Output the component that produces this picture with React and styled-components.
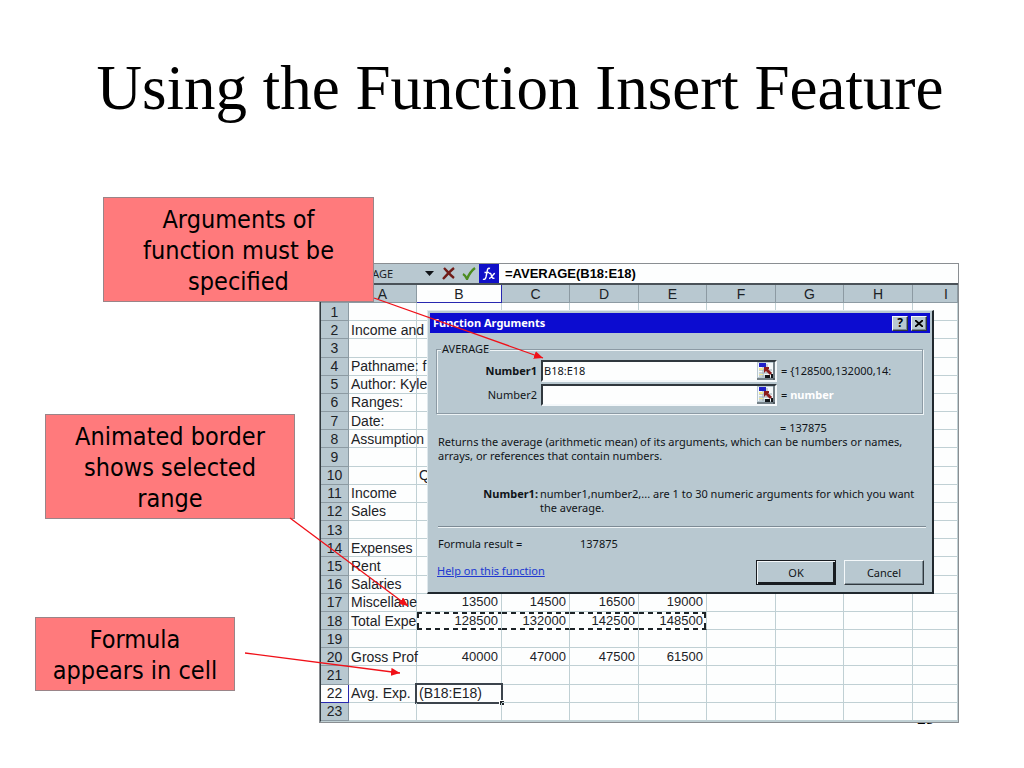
import React from 'react';
import styled, { createGlobalStyle, css } from 'styled-components';

const face = '#b8c8d0';
const grid = '#c0d0d4';
const ink = '#1c2226';
const uiFont = "'Noto Sans', 'DejaVu Sans Condensed', sans-serif";
const cellFont = "'Liberation Sans', Arial, sans-serif";

const GlobalStyle = createGlobalStyle`
  *, *::before, *::after { box-sizing: border-box; }
  body { margin: 0; background: #fff; }
`;

const Slide = styled.main`
  position: relative;
  min-height: 100vh;
  padding: 53px 65px 24px 319px;
  overflow: hidden;
  background: #fff;
  color: #000;
`;

const Title = styled.h1`
  margin: 0 -49px 140px -287px;
  font: 400 63px/70px 'Liberation Serif', 'Times New Roman', serif;
  text-align: center;
  white-space: nowrap;
`;

const Sheet = styled.section`
  position: relative;
  z-index: 1;
  height: 460px;
  border: 1px solid #8a8e92;
  background: #fdfefe;
  font-family: ${cellFont};
  color: ${ink};
`;

const FormulaBar = styled.div`
  display: flex;
  align-items: stretch;
  height: 21px;
  border-bottom: 2px solid #4a5258;
  background: ${face};
`;

const NameBox = styled.div`
  display: flex;
  align-items: center;
  justify-content: space-between;
  width: 116px;
  padding: 0 2px 0 26px;
  font: 11px/18px ${uiFont};
`;

const BarButton = styled.button`
  display: flex;
  align-items: center;
  justify-content: center;
  width: 20px;
  margin: 0;
  padding: 0;
  border: 0;
  background: ${(p) => (p.$active ? '#1010c8' : 'transparent')};
`;

const BarTools = styled.div`
  display: flex;
  width: 63px;
  padding-left: 3px;
`;

const FormulaInput = styled.input`
  flex: 1;
  min-width: 0;
  padding: 0 0 0 6px;
  border: 0;
  outline: 0;
  background: #fdfefe;
  font: 700 13px/18px ${cellFont};
  color: #000;
`;

const GridClip = styled.div`
  overflow: hidden;
  height: 437px;
  border-left: 1px solid #30383c;
  border-bottom: 1px solid ${grid};
`;

const GridTable = styled.table`
  width: 100%;
  height: 436px;
  table-layout: fixed;
  border-collapse: separate;
  border-spacing: 0;
  font-size: 14px;
  line-height: 16px;
`;

const ColHead = styled.th`
  height: 18px;
  padding: 0;
  border-right: 1px solid #8c9aa2;
  border-bottom: 1px solid #8c9aa2;
  background: ${face};
  font-weight: 400;
  ${(p) => p.$active && css`
    background: #fdfefe;
    border-right-color: #2828b0;
    border-bottom-color: #2828b0;
  `}
`;

const RowHead = styled(ColHead)``;

const LastHead = styled.span`
  display: block;
  padding-left: 22px;
`;

const Cell = styled.td`
  position: relative;
  height: 18px;
  padding: 0 3px 0 2px;
  border-right: 1px solid ${grid};
  border-bottom: 1px solid ${grid};
  white-space: nowrap;
  overflow: ${(p) => (p.$spill ? 'visible' : 'hidden')};
  ${(p) => p.$number && css`
    font-size: 13px;
    text-align: right;
  `}
  ${(p) => p.$marching && css`
    border-bottom-color: transparent;
    background:
      repeating-linear-gradient(90deg, ${ink} 0 5px, transparent 5px 9px) top / 100% 2px no-repeat border-box,
      repeating-linear-gradient(90deg, ${ink} 0 5px, transparent 5px 9px) bottom / 100% 2px no-repeat border-box;
  `}
  ${(p) => p.$edge && css`
    &::after {
      content: '';
      position: absolute;
      top: 0;
      bottom: 0;
      ${p.$edge}: 0;
      border-left: 2px dashed ${ink};
    }
  `}
  ${(p) => p.$active && css`
    overflow: visible;
    &::before {
      content: '';
      position: absolute;
      inset: -2px;
      border: 2px solid #3c444c;
    }
    &::after {
      content: '';
      position: absolute;
      right: -4px;
      bottom: -4px;
      width: 6px;
      height: 6px;
      border: 1px solid #fff;
      background: ${ink};
    }
  `}
`;

const Dialog = styled.form`
  position: absolute;
  top: 46px;
  left: 107px;
  width: 507px;
  height: 284px;
  padding: 2px;
  border: 1px solid #dfe8ec;
  border-right: 2px solid #20282e;
  border-bottom: 2px solid #20282e;
  background: ${face};
  font: 11px/14px ${uiFont};
  color: #101418;
`;

const TitleBar = styled.header`
  display: flex;
  align-items: center;
  gap: 3px;
  height: 20px;
  padding: 0 3px;
  background: #0c0cd0;
  color: #fff;
`;

const DialogTitle = styled.h2`
  flex: 1;
  margin: 0;
  font: 700 11px/16px ${uiFont};
`;

const raised = css`
  border: 1px solid;
  border-color: #f4f8fa #30383e #30383e #f4f8fa;
  box-shadow: inset -1px -1px 0 #7c8a92;
`;

const CaptionButton = styled.button`
  display: flex;
  align-items: center;
  justify-content: center;
  width: 16px;
  height: 15px;
  padding: 0;
  background: ${face};
  color: #000;
  font: 700 12px/12px ${uiFont};
  ${raised}
`;

const DialogBody = styled.div`
  display: flex;
  flex-direction: column;
  padding: 9px 4px 0 6px;
`;

const Group = styled.fieldset`
  display: grid;
  gap: 2px;
  min-width: 0;
  height: 72px;
  margin: 0 3px 7px 0;
  padding: 4px 22px 0 4px;
  border: 1px solid #8c9aa4;
  box-shadow: inset 1px 1px 0 #eef4f6, 1px 1px 0 #eef4f6;
  align-content: start;
`;

const Legend = styled.legend`
  height: 14px;
  padding: 0 1px;
  line-height: 14px;
  background: ${face};
`;

const ArgRow = styled.div`
  display: grid;
  grid-template-columns: 96px 236px 1fr;
  column-gap: 4px;
  align-items: center;
  height: 22px;
`;

const ArgLabel = styled.label`
  text-align: right;
  font-weight: ${(p) => (p.$bold ? 700 : 400)};
`;

const RefBox = styled.div`
  display: flex;
  height: 22px;
  border: 2px solid;
  border-color: #30383e #f4f8fa #f4f8fa #30383e;
  background: #fdfefe;
`;

const RefInput = styled.input`
  flex: 1;
  min-width: 0;
  padding: 0 1px;
  border: 0;
  outline: 0;
  background: transparent;
  font: 11px/14px ${uiFont};
  color: #101418;
`;

const RefButton = styled.button`
  width: 18px;
  height: 18px;
  padding: 0;
  border: 0;
  background: ${face};
  svg { display: block; }
`;

const ArgValue = styled.output`
  white-space: nowrap;
  b { color: #fff; }
`;

const Total = styled.output`
  padding-left: 344px;
`;

const Description = styled.p`
  margin: 0 0 24px;
  padding: 0 20px 0 2px;
`;

const ArgHelp = styled.p`
  display: grid;
  grid-template-columns: 102px 1fr;
  column-gap: 2px;
  margin: 0 0 11px;
  padding-right: 8px;
  b { text-align: right; }
`;

const Result = styled.div`
  display: grid;
  grid-template-columns: 142px 1fr;
  margin-left: 2px;
  padding-top: 10px;
  border-top: 1px solid #7c8a94;
  box-shadow: inset 0 1px 0 #eef4f6;
`;

const Footer = styled.footer`
  display: flex;
  align-items: center;
  gap: 8px;
  padding: 9px 2px 0 1px;
`;

const HelpLink = styled.a`
  margin-right: auto;
  padding-bottom: 4px;
  color: #2038d0;
`;

const PushButton = styled.button`
  width: 80px;
  height: 25px;
  padding: 0;
  background: ${face};
  font: 11px/14px ${uiFont};
  color: #101418;
  ${raised}
  ${(p) => p.$default && css`
    border: 1px solid #181c20;
    box-shadow: inset 1px 1px 0 #f4f8fa, inset -2px -2px 0 #181c20;
  `}
`;

const Callout = styled.aside`
  position: absolute;
  z-index: 2;
  top: ${(p) => p.$y}px;
  left: ${(p) => p.$x}px;
  width: ${(p) => p.$w}px;
  padding: 6px 16px 4px;
  border: 1px solid #9a8488;
  background: #ff7a7c;
  font: 25px/31px 'DejaVu Sans Condensed', 'Noto Sans', sans-serif;
  text-align: center;
`;

const Arrows = styled.svg`
  position: absolute;
  z-index: 3;
  top: 0;
  left: 0;
  pointer-events: none;
`;

const PageNumber = styled.div`
  margin: -15px 24px 0 0;
  font: 18px/20px 'Liberation Serif', 'Times New Roman', serif;
  text-align: right;
`;

const columns = ['A', 'B', 'C', 'D', 'E', 'F', 'G', 'H', 'I'];
const widths = [68, 85, 68, 69, 68, 69, 68, 69];
const rows = [
  [], ['Income and'], [], ['Pathname: f'], ['Author: Kyle'], ['Ranges:'], ['Date:'], ['Assumption'], [],
  ['', 'Q'], ['Income'], ['Sales'], [], ['Expenses'], ['Rent'], ['Salaries'],
  ['Miscellane', 13500, 14500, 16500, 19000],
  ['Total Expe', 128500, 132000, 142500, 148500],
  [], ['Gross Prof', 40000, 47000, 47500, 61500], [], ['Avg. Exp.', '(B18:E18)'], [],
];
const args = [
  { id: 'number1', label: 'Number1', value: 'B18:E18', bold: true, result: '{128500,132000,14:' },
  { id: 'number2', label: 'Number2', value: '', bold: false, result: <b>number</b> },
];
const arrows = [
  [374, 298, 543, 358],
  [290, 518, 408, 606],
  [245, 653, 400, 673],
];

const RangeIcon = () => (
  <svg width="18" height="18" viewBox="0 0 18 18">
    <path d="M1 1h15v14H1z" fill="#f4f8fa" />
    <path d="M2 1h7v4H2z" fill="#2020c8" />
    <path d="M2 8h13M2 11h13M2 14h7M6 5v10M10 2v9" stroke="#9cacb4" fill="none" />
    <path d="M2 6h4v2H2zM2 12h4v1H2z" fill="#f0e890" />
    <path d="M7 5h5v2h-1l4 4-2 2-4-4-2 2z" fill="#8c1c1c" />
    <path d="M8 13h5v3H8zM14 12h2v4h-2z" fill="#101418" />
    <path d="M17 0v18M0 17h18" stroke="#30383e" fill="none" />
  </svg>
);

function Spreadsheet() {
  return (
    <>
      <FormulaBar>
        <NameBox>
          AVERAGE
          <svg width="9" height="5" viewBox="0 0 9 5"><path d="M0 0h9L4.500 5z" fill="#101418" /></svg>
        </NameBox>
        <BarTools>
          <BarButton type="button" aria-label="Cancel entry">
            <svg width="14" height="13" viewBox="0 0 14 13">
              <path d="M2 1c3 3 6 7 10 10M12 1C8 4 5 8 1 12" stroke="#701c18" strokeWidth="2.400" fill="none" />
            </svg>
          </BarButton>
          <BarButton type="button" aria-label="Enter">
            <svg width="14" height="13" viewBox="0 0 14 13">
              <path d="M1 7c2 1 3 3 4 5C7 7 9 4 13 1" stroke="#4c8c20" strokeWidth="2.400" fill="none" />
            </svg>
          </BarButton>
          <BarButton type="button" $active aria-label="Insert function">
            <svg width="14" height="14" viewBox="0 0 14 14" fill="none" stroke="#fff" strokeWidth="1.400">
              <path d="M8 1.500C6 .5 5.500 2 5 5L4 10c-.5 2-1.500 3-3 2M2.500 5.500H7M7 6.500c2-1 2 1 2.500 2.500S11 12 12.500 11M13 6.500c-2-.5-3 5-6 5" />
            </svg>
          </BarButton>
        </BarTools>
        <FormulaInput aria-label="Formula" defaultValue="=AVERAGE(B18:E18)" />
      </FormulaBar>
      <GridClip>
        <GridTable>
          <colgroup>
            <col width="28" />
            {widths.map((w, i) => <col key={i} width={w} />)}
            <col />
          </colgroup>
          <thead>
            <tr>
              <ColHead />
              {columns.map((c) => (
                <ColHead key={c} scope="col" $active={c === 'B'}>
                  {c === 'I' ? <LastHead>{c}</LastHead> : c}
                </ColHead>
              ))}
            </tr>
          </thead>
          <tbody>
            {rows.map((row, r) => (
              <tr key={r}>
                <RowHead scope="row" $active={r === 21}>{r + 1}</RowHead>
                {columns.map((c, i) => {
                  const marching = r === 17 && i > 0 && i < 5;
                  return (
                    <Cell
                      key={c}
                      $spill={i === 0}
                      $number={typeof row[i] === 'number'}
                      $marching={marching}
                      $edge={marching && (i === 1 ? 'left' : i === 4 && 'right')}
                      $active={r === 21 && i === 1}
                    >
                      {row[i]}
                    </Cell>
                  );
                })}
              </tr>
            ))}
          </tbody>
        </GridTable>
      </GridClip>
    </>
  );
}

function FunctionDialog() {
  return (
    <Dialog aria-label="Function Arguments" onSubmit={(e) => e.preventDefault()}>
      <TitleBar>
        <DialogTitle>Function Arguments</DialogTitle>
        <CaptionButton type="button">?</CaptionButton>
        <CaptionButton type="button" aria-label="Close">
          <svg width="8" height="7" viewBox="0 0 8 7"><path d="M0 0l8 7M8 0L0 7" stroke="#000" strokeWidth="1.800" /></svg>
        </CaptionButton>
      </TitleBar>
      <DialogBody>
        <Group>
          <Legend>AVERAGE</Legend>
          {args.map((a) => (
            <ArgRow key={a.id}>
              <ArgLabel htmlFor={a.id} $bold={a.bold}>{a.label}</ArgLabel>
              <RefBox>
                <RefInput id={a.id} defaultValue={a.value} />
                <RefButton type="button" aria-label={`Select range for ${a.label}`}><RangeIcon /></RefButton>
              </RefBox>
              <ArgValue>= {a.result}</ArgValue>
            </ArgRow>
          ))}
        </Group>
        <Total>= 137875</Total>
        <Description>
          Returns the average (arithmetic mean) of its arguments, which can be numbers or names,
          <br />
          arrays, or references that contain numbers.
        </Description>
        <ArgHelp>
          <b>Number1:</b>
          <span>number1,number2,... are 1 to 30 numeric arguments for which you want the average.</span>
        </ArgHelp>
        <Result>
          <span>Formula result =</span>
          <output>137875</output>
        </Result>
        <Footer>
          <HelpLink href="#help">Help on this function</HelpLink>
          <PushButton type="submit" $default>OK</PushButton>
          <PushButton type="button">Cancel</PushButton>
        </Footer>
      </DialogBody>
    </Dialog>
  );
}

export default function App() {
  return (
    <>
      <GlobalStyle />
      <Slide>
        <Title>Using the Function Insert Feature</Title>
        <Sheet>
          <Spreadsheet />
          <FunctionDialog />
        </Sheet>
        <PageNumber>29</PageNumber>
        <Callout $x={103} $y={197} $w={271}>Arguments of<br />function must be<br />specified</Callout>
        <Callout $x={45} $y={414} $w={250}>Animated border<br />shows selected<br />range</Callout>
        <Callout $x={35} $y={617} $w={200}>Formula<br />appears in cell</Callout>
        <Arrows width="1024" height="768" viewBox="0 0 1024 768" aria-hidden="true">
          <defs>
            <marker id="head" markerUnits="userSpaceOnUse" markerWidth="10" markerHeight="8" refX="9" refY="4" orient="auto">
              <path d="M0 0l9 4-9 4z" fill="#f01018" />
            </marker>
          </defs>
          {arrows.map(([x1, y1, x2, y2]) => (
            <line key={y1} x1={x1} y1={y1} x2={x2} y2={y2} stroke="#f01018" strokeWidth="1.300" markerEnd="url(#head)" />
          ))}
        </Arrows>
      </Slide>
    </>
  );
}
